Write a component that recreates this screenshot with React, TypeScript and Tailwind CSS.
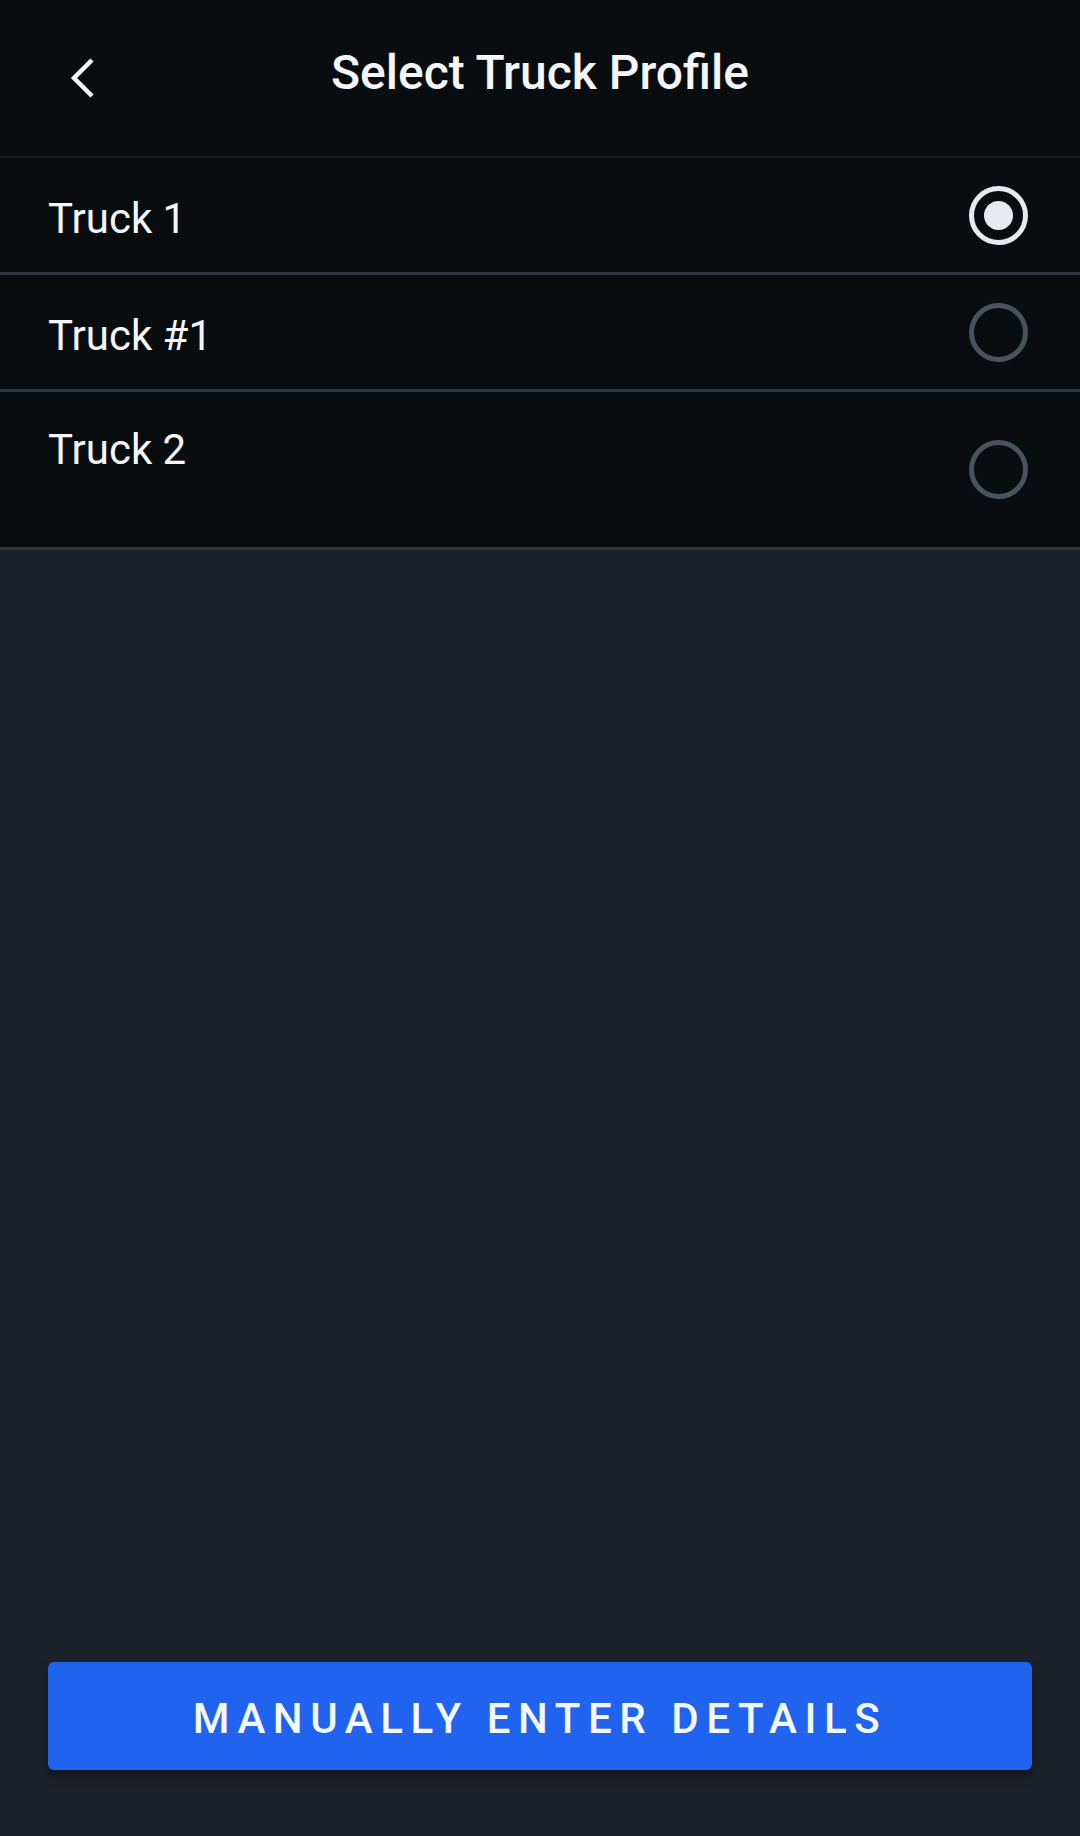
import React, { useState } from "react"

const trucks = [
    { id: "t1", label: "Truck 1", tall: false },
    { id: "t1b", label: "Truck #1", tall: false },
    { id: "t2", label: "Truck 2", tall: true },
]

function BackChevron() {
    return (
        <svg width="40" height="48" viewBox="0 0 40 48" fill="none">
            <polyline points="29,6 11,24 29,42" stroke="#f4f6f9" strokeWidth="4.5" strokeLinecap="butt" strokeLinejoin="miter" />
        </svg>
    )
}

function Radio({ checked }: { checked: boolean }) {
    return (
        <span
            className={`flex items-center justify-center w-[59px] h-[59px] rounded-full border-[5px] ${checked ? "border-[#e6e9ed]" : "border-[#4a535d]"}`}
        >
            {checked && <span className="block w-[29px] h-[29px] rounded-full bg-[#e6e9ed]" />}
        </span>
    )
}

export default function App() {
    const [selected, setSelected] = useState("t1")

    return (
        <div className="min-h-[1836px] flex flex-col bg-[#1b2129] text-[#f4f6f9] font-['Roboto','Liberation_Sans',sans-serif]">
            {/* Header */}
            <header className="h-[158px] bg-[#0a0d10] border-b-2 border-[#171c21] flex items-center relative">
                <button className="absolute left-[63px] top-[54px] w-[40px] h-[48px]">
                    <BackChevron />
                </button>
                <h1 className="w-full text-center text-[48px] font-medium leading-none pb-[10px]">Select Truck Profile</h1>
            </header>

            {/* Truck list */}
            <div className="bg-[#0a0d10]">
                {trucks.map((t) => (
                    <div
                        key={t.id}
                        onClick={() => setSelected(t.id)}
                        className={`flex justify-between items-center border-b-[3px] border-[#30373f] pl-[48px] pr-[52px] ${t.tall ? "h-[158px]" : "h-[117px]"}`}
                    >
                        <span className={`text-[42px] leading-none ${t.tall ? "self-start pt-[37px]" : "pt-[8px]"}`}>{t.label}</span>
                        <Radio checked={selected === t.id} />
                    </div>
                ))}
            </div>

            <div className="flex-1" />

            {/* Footer action */}
            <div className="px-[48px] pb-[66px]">
                <button className="w-full h-[108px] rounded-[6px] bg-[#1f63ee] shadow-[0_6px_10px_rgba(0,0,0,0.35)] text-[42px] font-medium tracking-[0.18em] text-[#f4f7fb] uppercase pt-[4px]">
                    Manually enter details
                </button>
            </div>
        </div>
    )
}
